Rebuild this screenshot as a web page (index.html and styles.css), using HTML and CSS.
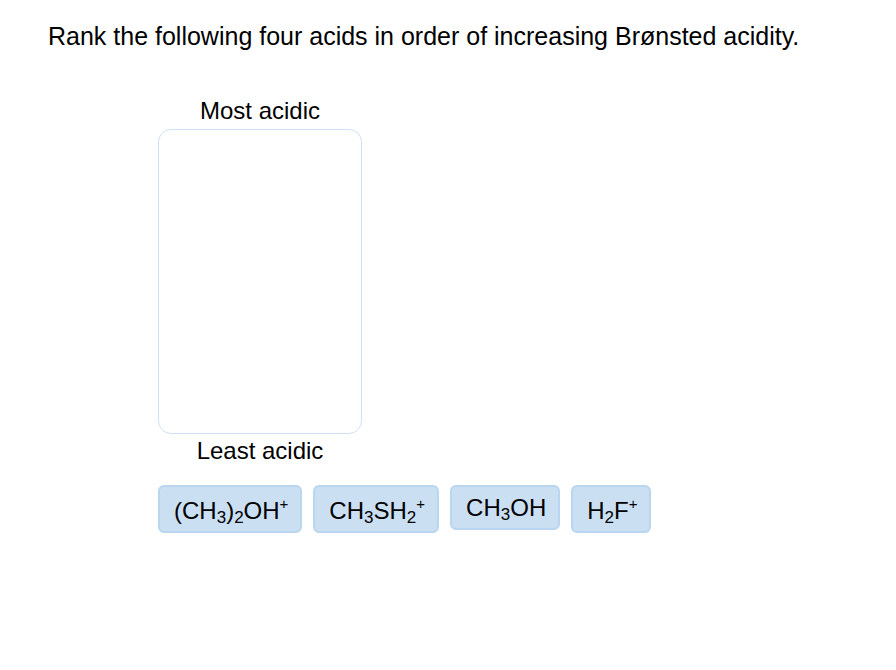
FILE: index.html
```html
<!DOCTYPE html>
<html lang="en">
<head>
    <meta charset="UTF-8">
    <title>Rank acids</title>
    <link rel="stylesheet" href="styles.css">
</head>
<body>
    <div class="question">
        <p class="prompt">Rank the following four acids in order of increasing Brønsted acidity.</p>

        <!-- Ranking target -->
        <div class="ranking">
            <div class="rank-label top">Most acidic</div>
            <div class="drop-zone"></div>
            <div class="rank-label bottom">Least acidic</div>
        </div>

        <!-- Draggable choices -->
        <div class="choices">
            <div class="tile">(CH<sub>3</sub>)<sub>2</sub>OH<sup>+</sup></div>
            <div class="tile">CH<sub>3</sub>SH<sub>2</sub><sup>+</sup></div>
            <div class="tile">CH<sub>3</sub>OH</div>
            <div class="tile">H<sub>2</sub>F<sup>+</sup></div>
        </div>
    </div>
</body>
</html>
```

FILE: styles.css
```css
* {
    margin: 0;
    padding: 0;
    box-sizing: border-box;
}

body {
    font-family: 'Liberation Sans', Arial, sans-serif;
    background: white;
    color: #000;
}

.question {
    padding: 22px 0 0 48px;
}

.prompt {
    font-size: 25px;
    line-height: 28px;
}

.ranking {
    width: 204px;
    margin: 48px 0 0 110px;
    text-align: center;
}

.rank-label {
    font-size: 24px;
    line-height: 26px;
}

.rank-label.top {
    margin-bottom: 5px;
}

.rank-label.bottom {
    margin-top: 4px;
}

.drop-zone {
    height: 305px;
    border: 1px solid #cfe0f3;
    border-radius: 13px;
}

.choices {
    display: flex;
    align-items: flex-start;
    gap: 11px;
    margin: 21px 0 0 110px;
}

.tile {
    background: #cbdff3;
    border: 2px solid #b9d5f0;
    border-radius: 6px;
    padding: 9px 12px 9px 14px;
    font-size: 24px;
    line-height: 23px;
}

.tile sub {
    font-size: 17px;
    vertical-align: -4px;
    line-height: 0;
}

/* the charge sits above the cap line and makes its tile a bit taller */
.tile sup {
    font-size: 15px;
    vertical-align: 10px;
    line-height: 1;
}
```
